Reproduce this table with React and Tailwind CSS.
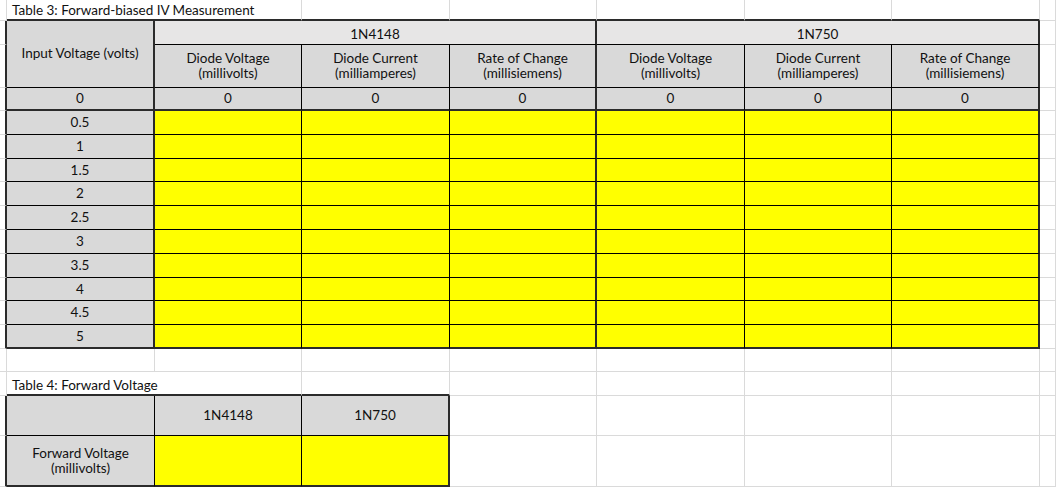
import React from 'react';

const gridLine = 'border-r border-b border-[#dadada]';
const edgeLeft = 'border-r-2 border-b border-r-[#2b2b2b] border-b-[#dadada]';
const aboveTable = 'border-r border-b-2 border-r-[#dadada] border-b-[#2b2b2b]';

const inputs = ['0.5', '1', '1.5', '2', '2.5', '3', '3.5', '4', '4.5', '5'];

function Cell({ className = '', children }) {
  return (
    <div className={`flex items-center justify-center text-center leading-[15px] ${className}`}>
      {children}
    </div>
  );
}

function Blank({ className = gridLine }) {
  return <div className={className} />;
}

function SubHead({ top, bottom, last }) {
  return (
    <Cell className={`bg-[#d9d9d9] border-b border-black ${last ? 'border-r-2 border-r-[#2b2b2b]' : 'border-r'}`}>
      <div>
        {top}
        <br />
        {bottom}
      </div>
    </Cell>
  );
}

export default function App() {
  return (
    <div className="w-[1056px] h-[487px] overflow-hidden bg-white text-[#111] text-[13.5px] font-['Lato','Liberation_Sans',sans-serif]">
      <div className="grid grid-cols-[7px_148px_147px_148px_147px_148px_147px_148px_16px] grid-rows-[21px_24px_43px_23px_24px_24px_23px_24px_24px_24px_24px_23px_24px_24px_23px_24px_40px_51px]">
        {/* title row */}
        <Blank />
        <Cell className={`col-span-2 justify-start items-end pl-[5px] pb-[1px] whitespace-nowrap ${aboveTable}`}>
          Table 3: Forward-biased IV Measurement
        </Cell>
        <Blank className={aboveTable} />
        <Blank className={aboveTable} />
        <Blank className={aboveTable} />
        <Blank className={aboveTable} />
        <Blank className={aboveTable} />
        <Blank />

        {/* header: diode names */}
        <Blank className={edgeLeft} />
        <Cell className="row-span-2 bg-[#d9d9d9] border-r-2 border-b border-r-[#2b2b2b] border-b-black pb-[2px]">
          Input Voltage (volts)
        </Cell>
        <Cell className="col-span-3 items-end pb-[2px] bg-[#e7e6e6] border-r-2 border-b border-r-[#2b2b2b] border-b-black">
          1N4148
        </Cell>
        <Cell className="col-span-3 items-end pb-[2px] bg-[#e7e6e6] border-r-2 border-b border-r-[#2b2b2b] border-b-black">
          1N750
        </Cell>
        <Blank />

        {/* header: quantities */}
        <Blank className={edgeLeft} />
        <SubHead top="Diode Voltage" bottom="(millivolts)" />
        <SubHead top="Diode Current" bottom="(milliamperes)" />
        <SubHead top="Rate of Change" bottom="(millisiemens)" last />
        <SubHead top="Diode Voltage" bottom="(millivolts)" />
        <SubHead top="Diode Current" bottom="(milliamperes)" />
        <SubHead top="Rate of Change" bottom="(millisiemens)" last />
        <Blank />

        {/* zero row */}
        <Blank className={edgeLeft} />
        <Cell className="bg-[#d9d9d9] border-r-2 border-b-2 border-[#2b2b2b]">0</Cell>
        <Cell className="bg-[#d9d9d9] border-r border-b-2 border-r-black border-b-[#2b2b2b]">0</Cell>
        <Cell className="bg-[#d9d9d9] border-r border-b-2 border-r-black border-b-[#2b2b2b]">0</Cell>
        <Cell className="bg-[#d9d9d9] border-r-2 border-b-2 border-[#2b2b2b]">0</Cell>
        <Cell className="bg-[#d9d9d9] border-r border-b-2 border-r-black border-b-[#2b2b2b]">0</Cell>
        <Cell className="bg-[#d9d9d9] border-r border-b-2 border-r-black border-b-[#2b2b2b]">0</Cell>
        <Cell className="bg-[#d9d9d9] border-r-2 border-b-2 border-[#2b2b2b]">0</Cell>
        <Blank />

        {/* measurement rows */}
        {inputs.map((v, i) => {
          const bottom = i === inputs.length - 1 ? 'border-b-2 border-b-[#2b2b2b]' : 'border-b border-b-black';
          const cell = `bg-[#ffff00] border-r border-r-black ${bottom}`;
          const cellEdge = `bg-[#ffff00] border-r-2 border-r-[#2b2b2b] ${bottom}`;
          return (
            <React.Fragment key={v}>
              <Blank className={edgeLeft} />
              <Cell className={`bg-[#d9d9d9] border-r-2 border-r-[#2b2b2b] ${bottom}`}>{v}</Cell>
              <div className={cell} />
              <div className={cell} />
              <div className={cellEdge} />
              <div className={cell} />
              <div className={cell} />
              <div className={cellEdge} />
              <Blank />
            </React.Fragment>
          );
        })}

        {/* spacer row */}
        <Blank />
        <Blank />
        <Blank />
        <Blank />
        <Blank />
        <Blank />
        <Blank />
        <Blank />
        <Blank />

        {/* table 4 title */}
        <Blank />
        <Cell className={`col-span-2 justify-start items-end pl-[5px] pb-[1px] whitespace-nowrap ${aboveTable}`}>
          Table 4: Forward Voltage
        </Cell>
        <Blank className={aboveTable} />
        <Blank />
        <Blank />
        <Blank />
        <Blank />
        <Blank />

        {/* table 4 header */}
        <Blank className={edgeLeft} />
        <div className="bg-[#d9d9d9] border-r border-b border-black" />
        <Cell className="bg-[#d9d9d9] border-r border-b border-black">1N4148</Cell>
        <Cell className="bg-[#d9d9d9] border-r-2 border-b border-r-[#2b2b2b] border-b-black">1N750</Cell>
        <Blank />
        <Blank />
        <Blank />
        <Blank />
        <Blank />

        {/* table 4 values */}
        <Blank className={edgeLeft} />
        <Cell className="bg-[#d9d9d9] border-r border-b-2 border-r-black border-b-[#2b2b2b]">
          <div>
            Forward Voltage
            <br />
            (millivolts)
          </div>
        </Cell>
        <div className="bg-[#ffff00] border-r border-b-2 border-r-black border-b-[#2b2b2b]" />
        <div className="bg-[#ffff00] border-r-2 border-b-2 border-[#2b2b2b]" />
        <Blank />
        <Blank />
        <Blank />
        <Blank />
        <Blank />
      </div>
    </div>
  );
}
